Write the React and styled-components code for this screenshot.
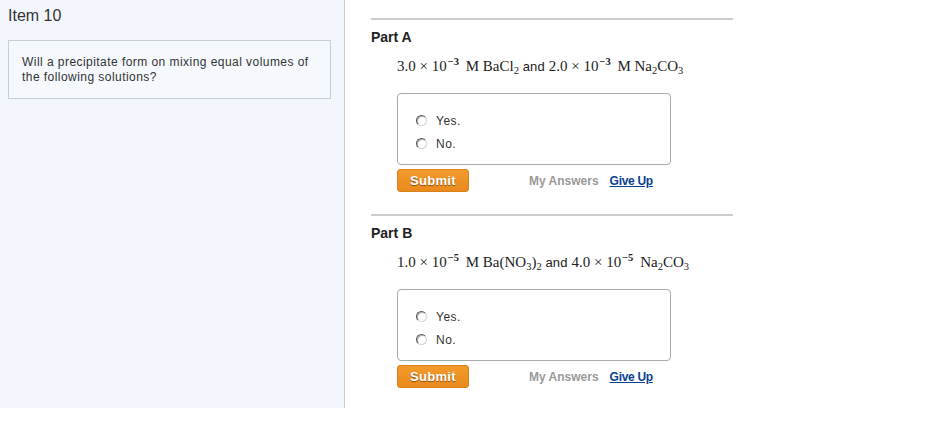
import React from 'react'
import styled, { createGlobalStyle } from 'styled-components'

const GlobalStyle = createGlobalStyle`
  html, body {
    margin: 0;
    padding: 0;
    background: #fff;
    font-family: Arial, "Liberation Sans", sans-serif;
    color: #333;
  }
`

const App = () => {
  return (
    <Page>
      <GlobalStyle />
      <Sidebar>
        <ItemTitle>Item 10</ItemTitle>
        <Question>
          Will a precipitate form on mixing equal volumes of the following solutions?
        </Question>
      </Sidebar>

      <Main>
        {parts.map((part) => (
          <Part key={part.id}>
            <PartTitle>Part {part.id}</PartTitle>
            <Formula>{part.formula}</Formula>
            <Options>
              <Option>
                <Radio />
                Yes.
              </Option>
              <Option>
                <Radio />
                No.
              </Option>
            </Options>
            <Actions>
              <SubmitButton>Submit</SubmitButton>
              <MyAnswers>My Answers</MyAnswers>
              <GiveUp href="#">Give Up</GiveUp>
            </Actions>
          </Part>
        ))}
      </Main>
    </Page>
  )
}

const Page = styled.div`
  display: flex;
  align-items: flex-start;
  width: 952px;
  height: 443px;
`

const Sidebar = styled.div`
  width: 345px;
  height: 408px;
  flex-shrink: 0;
  background: #f3f7fd;
  border-right: 1px solid #c9ccd2;
  padding: 7px 14px 0 8px;
  box-sizing: border-box;
`

const ItemTitle = styled.div`
  font-size: 16px;
  line-height: 18px;
  color: #333;
  margin-bottom: 15px;
`

const Question = styled.div`
  width: 323px;
  box-sizing: border-box;
  border: 1px solid #c8ced8;
  background: #f5f8fc;
  padding: 14px 13px 13px;
  font-size: 12px;
  line-height: 15px;
  letter-spacing: 0.45px;
  color: #333;
`

const Main = styled.div`
  width: 362px;
  margin-left: 26px;
  padding-top: 18px;
`

const Part = styled.div`
  border-top: 2px solid #cccccc;
  padding-top: 9px;
  padding-bottom: 22px;
`

const PartTitle = styled.div`
  font-size: 14px;
  font-weight: bold;
  line-height: 16px;
  color: #222;
`

const Formula = styled.div`
  height: 20px;
  margin: 11px 0 17px 26px;
  font-family: "Liberation Serif", "Times New Roman", serif;
  font-size: 15px;
  line-height: 20px;
  color: #222;
  white-space: nowrap;

  sup,
  sub {
    font-size: 10.5px;
    line-height: 0;
  }
  sup {
    vertical-align: 6px;
    font-weight: bold;
    margin-left: 1px;
    margin-right: 3px;
  }
  sub {
    vertical-align: -3px;
  }
`

const Plain = styled.span`
  font-family: Arial, "Liberation Sans", sans-serif;
  font-size: 13px;
  letter-spacing: 0.2px;
`

const Options = styled.div`
  margin-left: 26px;
  width: 274px;
  box-sizing: border-box;
  border: 1px solid #a9a9a9;
  border-radius: 4px;
  padding: 15px 17px 9px;
  background: #fff;
`

const Option = styled.label`
  display: flex;
  align-items: center;
  gap: 9px;
  height: 23px;
  font-size: 12px;
  letter-spacing: 0.5px;
  color: #333;
`

const Radio = styled.span`
  width: 9px;
  height: 9px;
  margin-left: 1px;
  border-radius: 50%;
  border: 1px solid;
  border-color: #555 #d4d4d4 #d4d4d4 #555;
  background: #fff;
  box-shadow: inset 1px 1px 0 #b0b0b0;
  flex-shrink: 0;
`

const Actions = styled.div`
  display: flex;
  align-items: center;
  margin: 4px 0 0 26px;
`

const SubmitButton = styled.button`
  width: 72px;
  height: 23px;
  border: 1px solid #d9801a;
  border-radius: 3px;
  background: linear-gradient(#f39a2c, #ea8a1c);
  color: #fff;
  font-family: Arial, "Liberation Sans", sans-serif;
  font-size: 13px;
  font-weight: bold;
  letter-spacing: 0.3px;
  text-shadow: 0 1px 1px rgba(0, 0, 0, 0.45);
  padding: 0;
`

const MyAnswers = styled.span`
  margin-left: 60px;
  font-size: 12px;
  font-weight: bold;
  color: #9a9a9a;
`

const GiveUp = styled.a`
  margin-left: 11px;
  font-size: 12px;
  font-weight: bold;
  letter-spacing: -0.3px;
  color: #0b3f8f;
  text-decoration: underline;
`

const parts = [
  {
    id: 'A',
    formula: (
      <>
        3.0 × 10<sup>−3</sup> M BaCl<sub>2</sub> <Plain>and</Plain> 2.0 × 10<sup>−3</sup> M Na
        <sub>2</sub>CO<sub>3</sub>
      </>
    ),
  },
  {
    id: 'B',
    formula: (
      <>
        1.0 × 10<sup>−5</sup> M Ba(NO<sub>3</sub>)<sub>2</sub> <Plain>and</Plain> 4.0 × 10
        <sup>−5</sup> Na<sub>2</sub>CO<sub>3</sub>
      </>
    ),
  },
]

export default App
